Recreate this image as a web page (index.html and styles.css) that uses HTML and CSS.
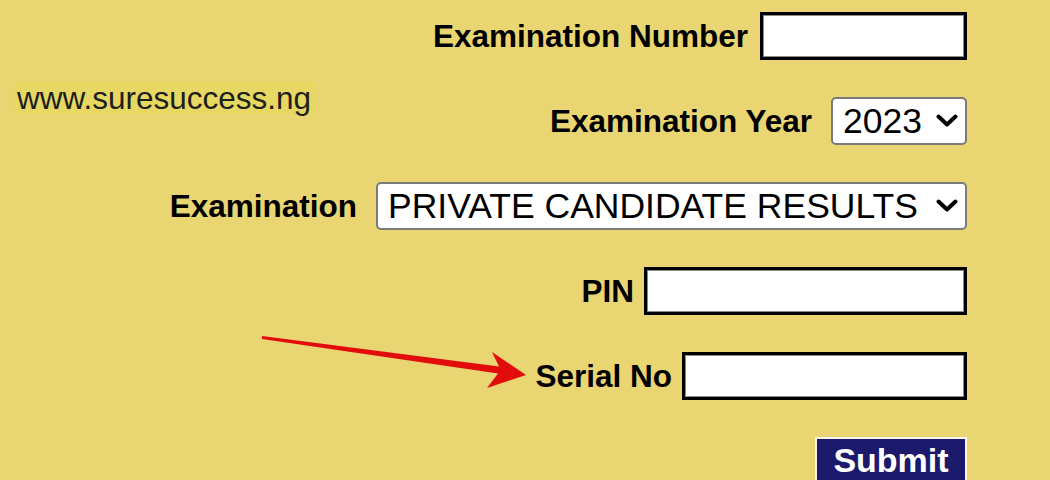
FILE: index.html
```html
<!DOCTYPE html>
<html>
<head>
<meta charset="utf-8">
<link rel="stylesheet" href="styles.css">
</head>
<body>
<div class="page">
  <div class="watermark">www.suresuccess.ng</div>
  <form class="form">
    <div class="row">
      <label class="label">Examination Number</label>
      <input class="field w-exnum" type="text">
    </div>
    <div class="row">
      <label class="label">Examination Year</label>
      <div class="select-wrap w-year">
        <select class="select"><option>2023</option></select>
        <svg class="chev" viewBox="0 0 22 13" width="22" height="13"><path d="M2.5 2.5 L11 10.5 L19.5 2.5" fill="none" stroke="#000" stroke-width="4" stroke-linecap="round" stroke-linejoin="round"/></svg>
      </div>
    </div>
    <div class="row">
      <label class="label">Examination</label>
      <div class="select-wrap w-exam">
        <select class="select"><option>PRIVATE CANDIDATE RESULTS</option></select>
        <svg class="chev" viewBox="0 0 22 13" width="22" height="13"><path d="M2.5 2.5 L11 10.5 L19.5 2.5" fill="none" stroke="#000" stroke-width="4" stroke-linecap="round" stroke-linejoin="round"/></svg>
      </div>
    </div>
    <div class="row">
      <label class="label">PIN</label>
      <input class="field w-pin" type="text">
    </div>
    <div class="row">
      <label class="label">Serial No</label>
      <input class="field w-serial" type="text">
    </div>
    <div class="row">
      <button class="submit" type="button">Submit</button>
    </div>
  </form>
  <svg class="arrow" width="1050" height="480" viewBox="0 0 1050 480">
    <polygon points="262,336 499,366.5 492,352 526,375 487,388 498,373.5 262,339" fill="#e20c0c"/>
  </svg>
</div>
</body>
</html>
```
FILE: styles.css
```css
html, body {
  margin: 0;
  padding: 0;
}
body {
  background: #e9d572;
  width: 1050px;
  height: 480px;
  overflow: hidden;
  font-family: "Liberation Sans", Arial, sans-serif;
}
.page {
  position: relative;
  width: 1050px;
  height: 480px;
}
.watermark {
  position: absolute;
  left: 13px;
  top: 82px;
  padding: 0 4px;
  height: 32px;
  line-height: 32px;
  font-size: 31.5px;
  color: #1e1e1e;
  background: #e6d862;
}
.form {
  width: 967px;
  padding-top: 12px;
  display: flex;
  flex-direction: column;
  align-items: flex-end;
  gap: 37px;
  margin: 0;
}
.row {
  display: flex;
  align-items: center;
  gap: 10px;
  height: 48px;
}
.label {
  font-weight: bold;
  font-size: 31.5px;
  color: #000;
}
.field {
  box-sizing: border-box;
  height: 48px;
  margin: 0;
  padding: 0;
  background: #fff;
  border: 3px solid #000;
  box-shadow: inset 0 0 0 1px #8a8a8a;
}
.w-exnum { width: 207px; margin-left: 2px; }
.w-pin { width: 323px; }
.w-serial { width: 285px; }
.select-wrap {
  position: relative;
  height: 48px;
  margin-left: 9px;
}
.w-year { width: 136px; }
.w-exam { width: 591px; }
.select {
  -webkit-appearance: none;
  appearance: none;
  box-sizing: border-box;
  width: 100%;
  height: 48px;
  margin: 0;
  padding: 0 0 0 10px;
  background: #fff;
  border: 2px solid #7b7b7b;
  border-radius: 5px;
  font-family: "Liberation Sans", Arial, sans-serif;
  font-size: 35.5px;
  color: #000;
}
.chev {
  position: absolute;
  right: 9px;
  top: 17px;
  pointer-events: none;
}
.submit {
  box-sizing: border-box;
  width: 152px;
  height: 52px;
  margin: 0;
  padding: 0 0 6px 0;
  align-self: flex-start;
  background: #1b1a6d;
  border: 2px solid #fbf7e8;
  color: #fff;
  font-family: "Liberation Sans", Arial, sans-serif;
  font-weight: bold;
  font-size: 34px;
}
.arrow {
  position: absolute;
  left: 0;
  top: 0;
  pointer-events: none;
}
```
